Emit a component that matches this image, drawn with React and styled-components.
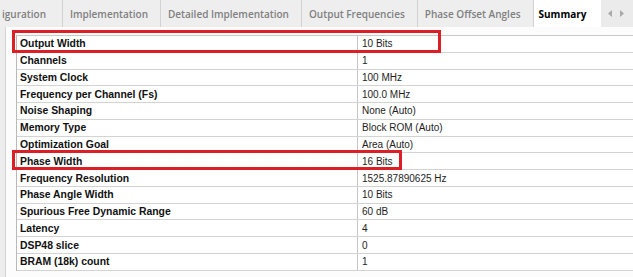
import React from "react";
import styled, { createGlobalStyle, css } from "styled-components";

const Global = createGlobalStyle`
  html, body { margin: 0; padding: 0; }
  body { background: #ededed; overflow: hidden; }
  #root { width: 633px; height: 277px; }
`;

const Page = styled.div`
  width: 633px;
  height: 277px;
  display: flex;
  flex-direction: column;
  background: #ededed;
  overflow: hidden;
`;

const TabBar = styled.div`
  height: 27px;
  flex: none;
  display: flex;
  align-items: stretch;
  background: #ebebeb;
  overflow: hidden;
`;

const Tab = styled.div`
  display: flex;
  align-items: center;
  flex: none;
  padding: 0 12px 0 7px;
  border-left: 1px solid #d2d2d2;
  font-family: "Open Sans", "Liberation Sans", sans-serif;
  font-size: 10px;
  font-weight: 600;
  color: #808080;
  background: #eeeeee;
  white-space: nowrap;
  ${(p) =>
    p.$first &&
    css`
      padding-left: 2px;
      padding-right: 16px;
      border-left: none;
    `}
  ${(p) =>
    p.$active &&
    css`
      background: #ffffff;
      color: #000000;
      font-weight: 700;
      padding: 0 14px 0 5px;
    `}
`;

const Arrows = styled.div`
  display: flex;
  align-items: center;
  gap: 8px;
  padding-left: 7px;
`;

const Content = styled.div`
  flex: 1;
  margin-left: 5px;
  border-left: 1px solid #d4d4d4;
  background: #fcfcfc;
  padding: 8px 0 0 10px;
`;

const Table = styled.div`
  border-top: 1px solid #c9c9c9;
  border-left: 1px solid #b9b9b9;
  background: #ffffff;
`;

const Row = styled.div`
  position: relative;
  box-sizing: border-box;
  height: 16.77px;
  display: grid;
  grid-template-columns: 340px 1fr;
  border-bottom: 1px solid #d3d3d3;
  ${(p) =>
    p.$hl &&
    css`
      &::after {
        content: "";
        position: absolute;
        left: -5px;
        top: ${p.$hl.top}px;
        bottom: ${p.$hl.bottom}px;
        width: ${p.$hl.width}px;
        box-sizing: border-box;
        border: 3px solid #dc1f27;
        pointer-events: none;
      }
    `}
`;

const Label = styled.div`
  display: flex;
  align-items: center;
  padding-left: 3px;
  font-family: "Liberation Sans", Arial, sans-serif;
  font-size: 10.4px;
  font-weight: 700;
  color: #111111;
  white-space: nowrap;
`;

const Value = styled.div`
  display: flex;
  align-items: center;
  padding-left: 4px;
  border-left: 1px solid #c6c6c6;
  font-family: "Liberation Sans", Arial, sans-serif;
  font-size: 10px;
  color: #1e1e1e;
  white-space: nowrap;
`;

const Arrow = ({ dir }) => (
  <svg width="4" height="7" viewBox="0 0 4 7">
    {dir === "left" ? (
      <path d="M4 0 L0 3.5 L4 7 Z" fill="#a9a9a9" />
    ) : (
      <path d="M0 0 L4 3.5 L0 7 Z" fill="#a9a9a9" />
    )}
  </svg>
);

const tabs = [
  "iguration",
  "Implementation",
  "Detailed Implementation",
  "Output Frequencies",
  "Phase Offset Angles",
  "Summary",
];

const rows = [
  ["Output Width", "10 Bits", { top: -6.5, bottom: -1.3, width: 429 }],
  ["Channels", "1"],
  ["System Clock", "100 MHz"],
  ["Frequency per Channel (Fs)", "100.0 MHz"],
  ["Noise Shaping", "None (Auto)"],
  ["Memory Type", "Block ROM (Auto)"],
  ["Optimization Goal", "Area (Auto)"],
  ["Phase Width", "16 Bits", { top: -3, bottom: -1.3, width: 390 }],
  ["Frequency Resolution", "1525.87890625 Hz"],
  ["Phase Angle Width", "10 Bits"],
  ["Spurious Free Dynamic Range", "60 dB"],
  ["Latency", "4"],
  ["DSP48 slice", "0"],
  ["BRAM (18k) count", "1"],
];

export default function App() {
  return (
    <>
      <Global />
      <Page>
        <TabBar>
          {tabs.map((t, i) => (
            <Tab key={t} $first={i === 0} $active={t === "Summary"}>
              {t}
            </Tab>
          ))}
          <Arrows>
            <Arrow dir="left" />
            <Arrow dir="right" />
          </Arrows>
        </TabBar>
        <Content>
          <Table>
            {rows.map(([l, v, hl]) => (
              <Row key={l} $hl={hl}>
                <Label>{l}</Label>
                <Value>{v}</Value>
              </Row>
            ))}
          </Table>
        </Content>
      </Page>
    </>
  );
}
